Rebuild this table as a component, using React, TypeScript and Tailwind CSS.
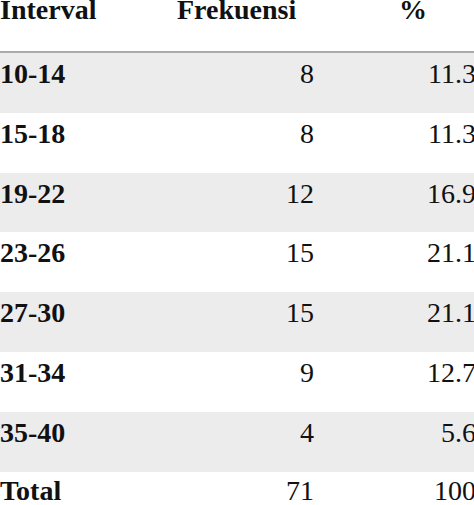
const rows = [
  { interval: '10-14', freq: '8', pct: '11.3' },
  { interval: '15-18', freq: '8', pct: '11.3' },
  { interval: '19-22', freq: '12', pct: '16.9' },
  { interval: '23-26', freq: '15', pct: '21.1' },
  { interval: '27-30', freq: '15', pct: '21.1' },
  { interval: '31-34', freq: '9', pct: '12.7' },
  { interval: '35-40', freq: '4', pct: '5.6' },
];

export default function App() {
  return (
    <div className="w-[474px] h-[505px] overflow-hidden bg-white text-[#111] font-['Liberation_Serif','Times_New_Roman',serif] text-[28px] leading-[28px]">
      <div className="w-[476px]">
        <div className="h-[53px] border-b-2 border-[#ababab]">
          <div className="flex font-bold leading-[20px]">
            <span className="w-[177px]">Interval</span>
            <span className="w-[222px]">Frekuensi</span>
            <span>%</span>
          </div>
        </div>

        {rows.map((r, i) => (
          <div
            key={r.interval}
            className={`flex h-[59.8px] pt-[7px] ${i % 2 === 0 ? 'bg-[#ececec]' : 'bg-white'}`}
          >
            <span className="w-[180px] font-bold">{r.interval}</span>
            <span className="w-[134px] text-right">{r.freq}</span>
            <span className="flex-1 text-right">{r.pct}</span>
          </div>
        ))}

        <div className="flex pt-[5px]">
          <span className="w-[180px] font-bold">Total</span>
          <span className="w-[134px] text-right">71</span>
          <span className="flex-1 text-right">100</span>
        </div>
      </div>
    </div>
  );
}
